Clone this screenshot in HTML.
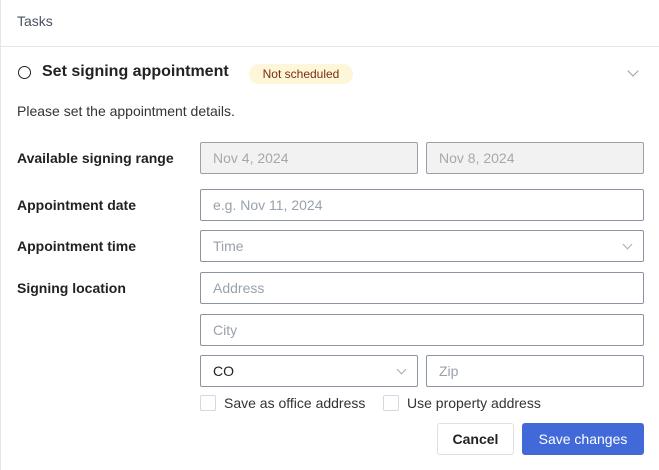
<!DOCTYPE html>
<html><head><style>
*{box-sizing:border-box;margin:0;padding:0}
body{width:659px;height:470px;background:#fff;font-family:"Liberation Sans",sans-serif;color:#222;position:relative;overflow:hidden}
.a{position:absolute}
.in{position:absolute;border:1px solid #8a94a2;border-radius:2px;height:32px;font-size:14px;color:#9aa1ab;padding:0 12px;line-height:30px;background:#fff}
.dis{background:#f2f2f2;border-color:#9aa1ab;color:#a8a8a8}
.lbl{position:absolute;left:17px;font-size:14px;font-weight:bold;color:#222}
.chev{position:absolute;right:12px;top:10px;width:7px;height:7px;border-right:1px solid #aab;border-bottom:1px solid #aab;transform:rotate(45deg)}
.cb{position:absolute;width:16px;height:16px;border:1px solid #d5d8dc;border-radius:2px}
</style></head><body>
<div class="a" style="left:0;top:0;width:1px;height:470px;background:#e3e5ea"></div>
<div class="a" style="left:17px;top:13px;font-size:14px;color:#4a5260">Tasks</div>
<div class="a" style="left:0;top:46px;width:659px;height:1px;background:#e3e5ea"></div>
<div class="a" style="left:18px;top:66px;width:13px;height:13px;border:1.5px solid #222;border-radius:50%"></div>
<div class="a" style="left:42px;top:63px;font-size:16px;font-weight:bold;color:#222">Set signing appointment</div>
<div class="a" style="left:249px;top:64px;height:20px;width:104px;border-radius:10px;background:#fdf6d8;color:#7a2e0e;font-size:12px;line-height:20px;text-align:center">Not scheduled</div>
<div class="a" style="left:629px;top:67px;width:8px;height:8px;border-right:1px solid #99a;border-bottom:1px solid #99a;transform:rotate(45deg)"></div>
<div class="a" style="left:17px;top:103px;font-size:14px;color:#333">Please set the appointment details.</div>
<div class="lbl" style="top:150px">Available signing range</div>
<div class="in dis" style="left:200px;top:142px;width:218px">Nov 4, 2024</div>
<div class="in dis" style="left:426px;top:142px;width:218px">Nov 8, 2024</div>
<div class="lbl" style="top:197px">Appointment date</div>
<div class="in" style="left:200px;top:189px;width:444px">e.g. Nov 11, 2024</div>
<div class="lbl" style="top:238px">Appointment time</div>
<div class="in" style="left:200px;top:230px;width:444px">Time<span class="chev"></span></div>
<div class="lbl" style="top:280px">Signing location</div>
<div class="in" style="left:200px;top:272px;width:444px">Address</div>
<div class="in" style="left:200px;top:314px;width:444px">City</div>
<div class="in" style="left:200px;top:355px;width:218px;color:#222">CO<span class="chev"></span></div>
<div class="in" style="left:426px;top:355px;width:218px">Zip</div>
<div class="cb" style="left:200px;top:395px"></div>
<div class="a" style="left:224px;top:395px;font-size:14px;color:#333">Save as office address</div>
<div class="cb" style="left:383px;top:395px"></div>
<div class="a" style="left:407px;top:395px;font-size:14px;color:#333">Use property address</div>
<div class="a" style="left:437px;top:423px;width:77px;height:32px;border:1px solid #dde0e4;border-radius:3px;font-size:14px;font-weight:bold;line-height:30px;text-align:center;color:#222">Cancel</div>
<div class="a" style="left:522px;top:423px;width:122px;height:32px;background:#4169d8;border-radius:3px;font-size:14px;line-height:32px;text-align:center;color:#fff">Save changes</div>
</body></html>
